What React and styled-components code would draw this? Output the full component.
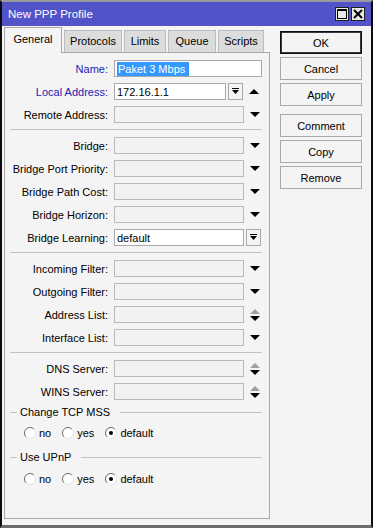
import React from 'react';
import styled, { createGlobalStyle } from 'styled-components';

const Global = createGlobalStyle`
  html, body { margin: 0; padding: 0; background: #6c6c6c; }
  body { font-family: "Liberation Sans", Arial, sans-serif; font-size: 11px; color: #000; }
  * { box-sizing: border-box; }
`;

const Window = styled.div`
  width: 373px;
  height: 528px;
  background: #f4f4f4;
  border-left: 2px solid #0c0c0c;
  border-right: 2px solid #0c0c0c;
  border-top: 2px solid #9a9a9a;
  border-bottom: 3px solid #6c6c6c;
  display: flex;
  flex-direction: column;
`;

const TitleBar = styled.div`
  height: 24px;
  flex: none;
  background: #5252c9;
  color: #fff;
  font-size: 11.5px;
  display: flex;
  align-items: center;
  justify-content: space-between;
  padding: 0 6px 0 6px;
`;

const TitleButtons = styled.div`
  display: flex;
  gap: 2px;
`;

const TitleBtn = styled.div`
  width: 14px;
  height: 14px;
  background: #e8e8e8;
  border: 1px solid #202020;
  display: flex;
  align-items: center;
  justify-content: center;
`;

const Body = styled.div`
  display: flex;
  padding: 1px 0 0 2px;
  gap: 10px;
`;

const LeftCol = styled.div`
  width: 266px;
  display: flex;
  flex-direction: column;
`;

const TabsRow = styled.div`
  height: 26px;
  display: flex;
  align-items: flex-end;
  gap: 2px;
  margin-bottom: -1px;
`;

const Tab = styled.div`
  position: relative;
  width: ${p => p.$w}px;
  height: ${p => (p.$active ? 26 : 23)}px;
  background: ${p => (p.$active ? '#f4f4f4' : '#dcdcdc')};
  border: 1px solid ${p => (p.$active ? '#a8a8a8' : '#bcbcbc')};
  border-bottom: ${p => (p.$active ? 'none' : '1px solid #a8a8a8')};
  z-index: ${p => (p.$active ? 1 : 0)};
  display: flex;
  align-items: center;
  justify-content: center;
  padding-bottom: ${p => (p.$active ? 4 : 1)}px;
`;

const Panel = styled.div`
  height: 467px;
  border: 1px solid #a8a8a8;
  padding-top: 7px;
  display: flex;
  flex-direction: column;
`;

const Row = styled.div`
  display: flex;
  align-items: center;
  height: 17px;
  margin-bottom: 6px;
`;

const Label = styled.div`
  width: 103px;
  margin-right: 6px;
  text-align: right;
  white-space: nowrap;
  color: ${p => (p.$blue ? '#2121b5' : '#000')};
`;

const TextBox = styled.div`
  width: ${p => p.$w}px;
  height: 17px;
  border: 1px solid ${p => (p.$white ? '#a9a9a9' : '#b9b9b9')};
  background: ${p => (p.$white ? '#fff' : '#f2f2f2')};
  padding-left: 2px;
  display: flex;
  align-items: center;
  white-space: nowrap;
`;

const Selected = styled.span`
  background: #3399ff;
  color: #fff;
  padding: 1px 1px 1px 1px;
  white-space: pre;
`;

const DropBtn = styled.div`
  width: 15px;
  height: 17px;
  margin-left: 2px;
  border: 1px solid #a9a9a9;
  background: #f4f4f4;
  display: flex;
  align-items: center;
  justify-content: center;
`;

const Slot = styled.div`
  width: 22px;
  height: 17px;
  display: flex;
  flex-direction: column;
  align-items: center;
  justify-content: center;
  gap: 2px;
`;

const Separator = styled.div`
  height: 1px;
  background: #c2c2c2;
  margin: 0 7px 7px 5px;
  flex: none;
`;

const GroupHead = styled.div`
  display: flex;
  align-items: center;
  height: 12px;
  margin: ${p => p.$top}px 7px 0 5px;
`;

const GroupLine = styled.div`
  height: 1px;
  background: #c2c2c2;
  width: ${p => (p.$w ? `${p.$w}px` : 'auto')};
  flex: ${p => (p.$w ? 'none' : '1')};
`;

const GroupTitle = styled.span`
  margin: 0 10px 0 3px;
  white-space: nowrap;
`;

const RadioRow = styled.div`
  display: flex;
  align-items: center;
  height: 14px;
  margin-top: ${p => p.$top}px;
  padding-left: 19px;
`;

const RadioItem = styled.div`
  display: flex;
  align-items: center;
  gap: 3px;
  margin-right: 11px;
`;

const RightCol = styled.div`
  width: 82px;
  display: flex;
  flex-direction: column;
  padding-top: 4px;
`;

const Button = styled.div`
  height: 23px;
  margin-bottom: ${p => (p.$gapAfter ? 8 : 3)}px;
  border: 1px solid ${p => (p.$default ? '#101010' : '#a9a9a9')};
  box-shadow: ${p => (p.$default ? 'inset 0 0 0 1px #3a3a3a' : 'none')};
  background: #f4f4f4;
  display: flex;
  align-items: center;
  justify-content: center;
`;

const DownBarIcon = () => (
  <svg width="7" height="7" viewBox="0 0 7 7">
    <rect x="0" y="0" width="7" height="1" fill="#000" />
    <polygon points="0,2 7,2 3.5,6" fill="#000" />
  </svg>
);

const Up = ({ color = '#000' }) => (
  <svg width="10" height="5" viewBox="0 0 10 5">
    <polygon points="0,5 10,5 5,0" fill={color} />
  </svg>
);

const Down = ({ color = '#000' }) => (
  <svg width="10" height="5" viewBox="0 0 10 5">
    <polygon points="0,0 10,0 5,5" fill={color} />
  </svg>
);

const UpDown = () => (
  <>
    <Up color="#a0a0a0" />
    <Down />
  </>
);

const RadioIcon = ({ checked }) => (
  <svg width="12" height="12" viewBox="0 0 12 12">
    <circle cx="6" cy="6" r="5.5" fill="#fff" />
    <path d="M9.9 2.1 A5.5 5.5 0 0 0 2.1 9.9" stroke="#6a6a6a" strokeWidth="1" fill="none" />
    <path d="M2.1 9.9 A5.5 5.5 0 0 0 9.9 2.1" stroke="#e4e4e4" strokeWidth="1" fill="none" />
    {checked && <circle cx="6" cy="6" r="2" fill="#000" />}
  </svg>
);

const Radios = ({ top }) => (
  <RadioRow $top={top}>
    <RadioItem><RadioIcon /><span>no</span></RadioItem>
    <RadioItem><RadioIcon /><span>yes</span></RadioItem>
    <RadioItem><RadioIcon checked /><span>default</span></RadioItem>
  </RadioRow>
);

const ArrowRow = ({ label, icon, white, value }) => (
  <Row>
    <Label>{label}</Label>
    <TextBox $w={130} $white={white}>{value}</TextBox>
    <Slot>{icon}</Slot>
  </Row>
);

const tabs = [
  { name: 'General', w: 58, active: true },
  { name: 'Protocols', w: 58 },
  { name: 'Limits', w: 42 },
  { name: 'Queue', w: 48 },
  { name: 'Scripts', w: 46 },
];

const buttons = [
  { name: 'OK', def: true },
  { name: 'Cancel' },
  { name: 'Apply', gap: true },
  { name: 'Comment' },
  { name: 'Copy' },
  { name: 'Remove' },
];

export default function App() {
  return (
    <>
      <Global />
      <Window>
        <TitleBar>
          <span>New PPP Profile</span>
          <TitleButtons>
            <TitleBtn>
              <svg width="10" height="10" viewBox="0 0 10 10">
                <rect x="0.5" y="0.5" width="9" height="9" fill="none" stroke="#000" strokeWidth="1" />
                <rect x="0.5" y="0.5" width="9" height="1.5" fill="#000" />
              </svg>
            </TitleBtn>
            <TitleBtn>
              <svg width="10" height="10" viewBox="0 0 10 10">
                <path d="M1 1 L9 9 M9 1 L1 9" stroke="#000" strokeWidth="2" />
              </svg>
            </TitleBtn>
          </TitleButtons>
        </TitleBar>
        <Body>
          <LeftCol>
            <TabsRow>
              {tabs.map(t => (
                <Tab key={t.name} $w={t.w} $active={t.active}>{t.name}</Tab>
              ))}
            </TabsRow>
            <Panel>
              <Row>
                <Label $blue>Name:</Label>
                <TextBox $w={148} $white><Selected>Paket 3 Mbps </Selected></TextBox>
              </Row>
              <Row>
                <Label $blue>Local Address:</Label>
                <TextBox $w={112} $white>172.16.1.1</TextBox>
                <DropBtn><DownBarIcon /></DropBtn>
                <Slot><Up /></Slot>
              </Row>
              <ArrowRow label="Remote Address:" icon={<Down />} />
              <Separator />
              <ArrowRow label="Bridge:" icon={<Down />} />
              <ArrowRow label="Bridge Port Priority:" icon={<Down />} />
              <ArrowRow label="Bridge Path Cost:" icon={<Down />} />
              <ArrowRow label="Bridge Horizon:" icon={<Down />} />
              <Row>
                <Label>Bridge Learning:</Label>
                <TextBox $w={130} $white>default</TextBox>
                <DropBtn><DownBarIcon /></DropBtn>
              </Row>
              <Separator />
              <ArrowRow label="Incoming Filter:" icon={<Down />} />
              <ArrowRow label="Outgoing Filter:" icon={<Down />} />
              <ArrowRow label="Address List:" icon={<UpDown />} />
              <ArrowRow label="Interface List:" icon={<Down />} />
              <Separator />
              <ArrowRow label="DNS Server:" icon={<UpDown />} />
              <ArrowRow label="WINS Server:" icon={<UpDown />} />
              <GroupHead $top={0}>
                <GroupLine $w={7} />
                <GroupTitle>Change TCP MSS</GroupTitle>
                <GroupLine />
              </GroupHead>
              <Radios top={8} />
              <GroupHead $top={11}>
                <GroupLine $w={7} />
                <GroupTitle>Use UPnP</GroupTitle>
                <GroupLine />
              </GroupHead>
              <Radios top={9} />
            </Panel>
          </LeftCol>
          <RightCol>
            {buttons.map(b => (
              <Button key={b.name} $default={b.def} $gapAfter={b.gap}>{b.name}</Button>
            ))}
          </RightCol>
        </Body>
      </Window>
    </>
  );
}
